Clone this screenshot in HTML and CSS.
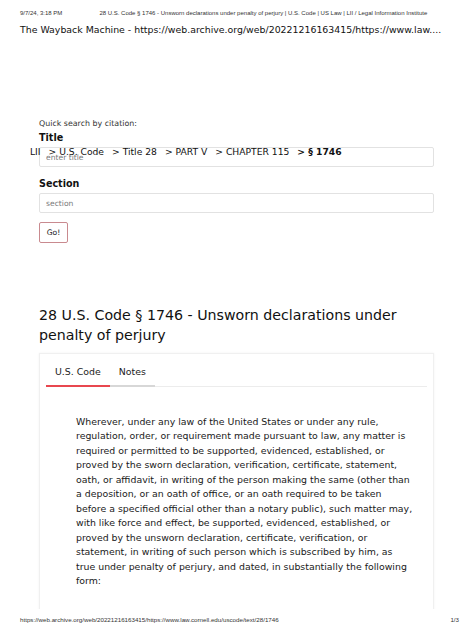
FILE: index.html
```html
<!DOCTYPE html>
<html lang="en">
<head>
    <meta charset="UTF-8">
    <meta name="viewport" content="width=device-width, initial-scale=1.0">
    <title>28 U.S. Code § 1746 - Unsworn declarations under penalty of perjury</title>
    <link rel="stylesheet" href="styles.css">
</head>
<body>
    <div class="page">
        <div class="printhead">
            <span class="date">9/7/24, 3:18 PM</span>
            <span class="doctitle">28 U.S. Code § 1746 - Unsworn declarations under penalty of perjury | U.S. Code | US Law | LII / Legal Information Institute</span>
        </div>
        <div class="wayback">The Wayback Machine - https://web.archive.org/web/20221216163415/https://www.law....</div>

        <main>
            <form class="search">
                <p class="hint">Quick search by citation:</p>
                <label class="lbl">Title</label>
                <div class="field">
                    <input type="text" placeholder="enter title">
                    <div class="crumbs">
                        <span>LII</span>
                        <span>&gt; U.S. Code</span>
                        <span>&gt; Title 28</span>
                        <span>&gt; PART V</span>
                        <span>&gt; CHAPTER 115</span>
                        <b>&gt; § 1746</b>
                    </div>
                </div>
                <label class="lbl">Section</label>
                <div class="field">
                    <input type="text" placeholder="section">
                </div>
                <button type="button" class="go">Go!</button>
            </form>

            <h1>28 U.S. Code § 1746 - Unsworn declarations under penalty of perjury</h1>

            <div class="card">
                <ul class="tabs">
                    <li class="active">U.S. Code</li>
                    <li class="notes">Notes</li>
                </ul>
                <div class="text">
                    <p>Wherever, under any law of the United States or under any rule,<br>
                    regulation, order, or requirement made pursuant to law, any matter is<br>
                    required or permitted to be supported, evidenced, established, or<br>
                    proved by the sworn declaration, verification, certificate, statement,<br>
                    oath, or affidavit, in writing of the person making the same (other than<br>
                    a deposition, or an oath of office, or an oath required to be taken<br>
                    before a specified official other than a notary public), such matter may,<br>
                    with like force and effect, be supported, evidenced, established, or<br>
                    proved by the unsworn declaration, certificate, verification, or<br>
                    statement, in writing of such person which is subscribed by him, as<br>
                    true under penalty of perjury, and dated, in substantially the following<br>
                    form:</p>
                </div>
            </div>
        </main>

        <div class="printfoot">
            <span>https://web.archive.org/web/20221216163415/https://www.law.cornell.edu/uscode/text/28/1746</span>
            <span>1/3</span>
        </div>
    </div>
</body>
</html>
```

FILE: styles.css
```css
body {
    margin: 0;
    padding: 0;
    background-color: #ffffff;
    font-family: 'DejaVu Sans', Verdana, sans-serif;
    color: #222222;
}
.page {
    height: 632px;
    display: flex;
    flex-direction: column;
    overflow: hidden;
}
.printhead {
    display: flex;
    gap: 37px;
    padding: 10px 20px 0 20px;
    font-family: 'Liberation Sans', Arial, sans-serif;
    font-size: 6px;
    color: #333333;
    white-space: nowrap;
}
.wayback {
    padding: 8px 0 0 20px;
    font-size: 9.4px;
    color: #111111;
    white-space: nowrap;
}
main {
    flex: 1;
    overflow: hidden;
    padding: 0 40px 0 39px;
}
.search {
    padding-top: 84px;
}
.hint {
    margin: 0;
    font-size: 7.9px;
    color: #333333;
}
.lbl {
    display: block;
    margin-top: 4px;
    font-size: 9.6px;
    font-weight: bold;
    color: #111111;
}
.field {
    position: relative;
    margin-top: 4px;
}
.field input {
    display: block;
    box-sizing: border-box;
    width: 100%;
    height: 20px;
    padding: 0 6px;
    border: 1px solid #e2e2e2;
    border-radius: 2px;
    font-family: 'DejaVu Sans', Verdana, sans-serif;
    font-size: 7.6px;
    color: #777777;
}
.field input::placeholder {
    color: #7a7a7a;
}
.crumbs + input,
.field + .lbl {
    margin-top: 11px;
}
.lbl + .field + .go {
    margin-top: 9px;
}
.crumbs {
    position: absolute;
    left: -9px;
    top: -1px;
    display: flex;
    gap: 8px;
    font-size: 9.2px;
    color: #111111;
    white-space: nowrap;
}
.go {
    display: block;
    margin-top: 9px;
    width: 29px;
    height: 21px;
    padding: 0;
    background: #ffffff;
    border: 1px solid #c98a8f;
    border-radius: 2px;
    font-family: 'DejaVu Sans', Verdana, sans-serif;
    font-size: 7.6px;
    color: #222222;
}
h1 {
    margin: 62px 0 0 0;
    font-size: 14.2px;
    font-weight: normal;
    line-height: 20px;
    color: #111111;
}
.card {
    margin-top: 8px;
    border: 1px solid #f0f0f0;
    box-shadow: 0 0 2px rgba(0, 0, 0, 0.06);
    padding: 0 6px 60px 6px;
}
.tabs {
    list-style-type: none;
    margin: 0;
    padding: 0;
    display: flex;
    border-bottom: 1px solid #ececec;
    font-size: 9.4px;
    line-height: 11px;
    color: #222222;
}
.tabs li {
    padding: 12px 9px 8px 9px;
    border-bottom: 2px solid transparent;
    margin-bottom: -1px;
}
.tabs li.active {
    border-bottom-color: #e8474f;
}
.tabs li.notes {
    border-bottom-color: #d7d7d7;
}
.text {
    padding: 28px 0 0 30px;
    font-size: 9.4px;
    line-height: 14.45px;
    color: #1a1a1a;
}
.text p {
    margin: 0;
    white-space: nowrap;
}
.printfoot {
    display: flex;
    justify-content: space-between;
    padding: 7px 15px 9px 20px;
    font-family: 'Liberation Sans', Arial, sans-serif;
    font-size: 6.2px;
    color: #333333;
}
```
